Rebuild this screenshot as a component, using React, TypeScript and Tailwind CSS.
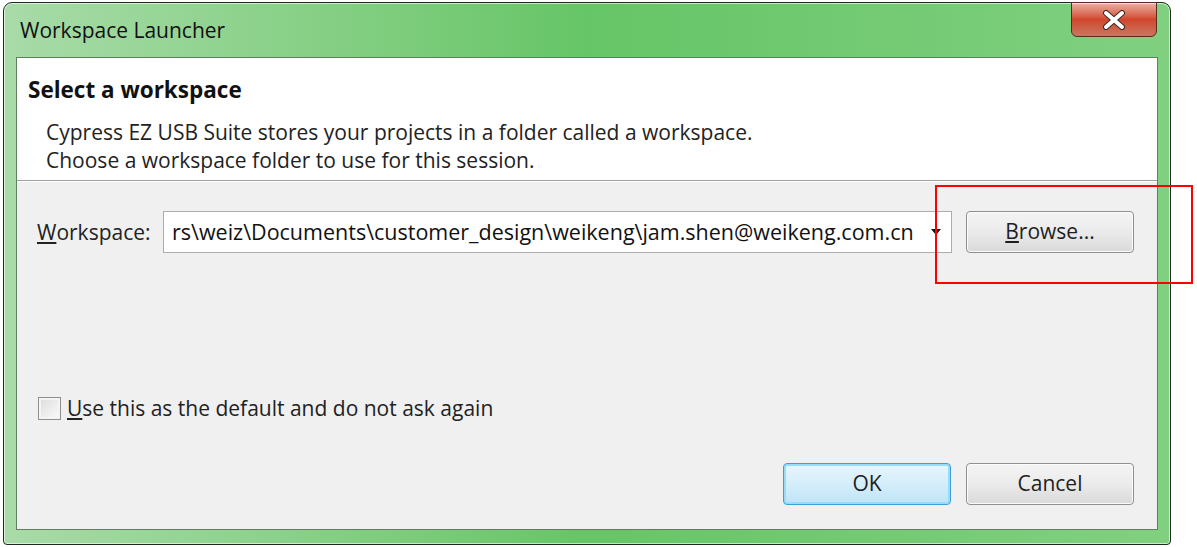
import React from "react";

const font = { fontFamily: '"Open Sans", "Noto Sans", sans-serif' };

function CloseButton() {
  return (
    <div className="w-[86px] h-[35px] rounded-b-[6px] border border-[#5a2a22] bg-gradient-to-b from-[#eab0a3] via-[#d0462c] to-[#c97560] flex items-center justify-center shadow-[inset_0_1px_0_rgba(255,255,255,0.6)]">
      <svg width="26" height="20" viewBox="0 0 26 20">
        <path
          d="M5 3 L21 17 M21 3 L5 17"
          stroke="#3b2a28"
          strokeWidth="6"
          strokeLinecap="round"
        />
        <path
          d="M5 3 L21 17 M21 3 L5 17"
          stroke="#ffffff"
          strokeWidth="4"
          strokeLinecap="round"
        />
      </svg>
    </div>
  );
}

function WinButton({
  children,
  primary,
}: {
  children: React.ReactNode;
  primary?: boolean;
}) {
  return (
    <button
      className={`h-[42px] w-[168px] rounded-[4px] border text-[21px] text-[#1e1e1e] ${
        primary
          ? "border-[#3c9fd6] bg-gradient-to-b from-[#e8f6fd] via-[#d4eefb] to-[#bfe3f7] shadow-[inset_0_0_0_2px_#98dcf7]"
          : "border-[#8e8f8f] bg-gradient-to-b from-[#f4f4f4] via-[#ebebeb] to-[#d9d9d9] shadow-[inset_0_0_0_1px_#fbfbfb]"
      }`}
    >
      {children}
    </button>
  );
}

export default function App() {
  return (
    <div className="w-[1197px] h-[547px] bg-white relative" style={font}>
      <div className="ml-[3px] pt-[2px] w-[1168px]">
        <div className="h-[543px] rounded-t-[9px] rounded-b-[4px] border border-[#1f2a1f] bg-gradient-to-r from-[#a8dba8] via-[#66c566] to-[#80d080] flex flex-col px-[12px] pb-[14px] shadow-[inset_0_0_0_1px_rgba(255,255,255,0.6)]">
          <div className="h-[54px] flex justify-between items-start shrink-0">
            <div className="pl-[4px] pt-[17px] text-[21px] text-[#111] leading-none">
              Workspace Launcher
            </div>
            <div className="-mt-[1px] mr-[1px]">
              <CloseButton />
            </div>
          </div>

          <div className="flex-1 border border-[#5f7f5f] bg-[#f0f0f0] flex flex-col">
            <div className="bg-white h-[123px] border-b border-[#a0a0a0] px-[11px] pt-[18px]">
              <div className="text-[22.5px] font-bold text-[#111] leading-[28px]">
                Select a workspace
              </div>
              <div className="pl-[18px] pt-[14px] text-[21px] text-[#222] leading-[28px]">
                <div>
                  Cypress EZ USB Suite stores your projects in a folder called a
                  workspace.
                </div>
                <div>Choose a workspace folder to use for this session.</div>
              </div>
            </div>
            <div className="h-px bg-white" />

            <div className="flex items-center pl-[20px] pr-[23px] pt-[29px]">
              <div className="w-[126px] text-[21px] text-[#222] pt-[2px]">
                <span className="underline underline-offset-2">W</span>orkspace:
              </div>
              <div className="w-[789px] h-[42px] border border-[#abadb3] bg-white flex items-center pl-[8px] pr-[10px]">
                <span className="flex-1 text-[21.5px] text-[#111] whitespace-nowrap overflow-hidden">
                  rs\weiz\Documents\customer_design\weikeng\jam.shen@weikeng.com.cn
                </span>
                <svg width="10" height="8" viewBox="0 0 10 8" className="ml-2">
                  <path d="M0 1 L10 1 L5 7 Z" fill="#111" />
                </svg>
              </div>
              <div className="ml-[14px]">
                <WinButton>
                  <span className="underline underline-offset-2">B</span>rowse...
                </WinButton>
              </div>
            </div>

            <div className="flex-1" />

            <label className="flex items-center pl-[21px] gap-[6px] text-[21px] text-[#222]">
              <span className="w-[23px] h-[23px] border border-[#8f8f8f] bg-gradient-to-br from-[#dcdcdc] to-[#fbfbfb] shadow-[inset_0_0_0_2px_#f4f4f4]" />
              <span>
                <span className="underline underline-offset-2">U</span>se this as
                the default and do not ask again
              </span>
            </label>

            <div className="flex justify-end gap-[15px] pr-[23px] pt-[39px] pb-[24px]">
              <WinButton primary>OK</WinButton>
              <WinButton>Cancel</WinButton>
            </div>
          </div>
        </div>
      </div>

      <div className="absolute left-[935px] top-[185px] w-[258px] h-[99px] border-2 border-[#ff0000]" />
    </div>
  );
}
